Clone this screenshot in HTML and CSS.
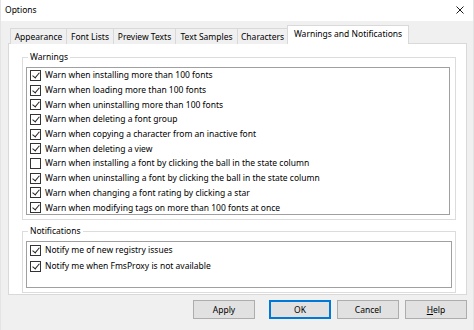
FILE: index.html
```html
<!DOCTYPE html>
<html>
<head>
<meta charset="utf-8">
<link rel="stylesheet" href="styles.css">
</head>
<body>
<div class="window">
  <div class="titlebar">
    <span class="title">Options</span>
    <svg class="close" width="8" height="8" viewBox="0 0 8 8"><path d="M0.5 0.5L7.5 7.5M7.5 0.5L0.5 7.5" stroke="#1a1a1a" stroke-width="1"/></svg>
  </div>
  <div class="content">
    <div class="tabs">
      <div class="tab w1">Appearance</div>
      <div class="tab w2">Font Lists</div>
      <div class="tab w3">Preview Texts</div>
      <div class="tab w4">Text Samples</div>
      <div class="tab w5">Characters</div>
      <div class="tab active w6">Warnings and Notifications</div>
    </div>
    <div class="panel">
      <fieldset class="group g-warn">
        <legend>Warnings</legend>
        <div class="list list-warn">
          <div class="row"><span class="cb on"></span>Warn when installing more than 100 fonts</div>
          <div class="row"><span class="cb on"></span>Warn when loading more than 100 fonts</div>
          <div class="row"><span class="cb on"></span>Warn when uninstalling more than 100 fonts</div>
          <div class="row"><span class="cb on"></span>Warn when deleting a font group</div>
          <div class="row"><span class="cb on"></span>Warn when copying a character from an inactive font</div>
          <div class="row"><span class="cb on"></span>Warn when deleting a view</div>
          <div class="row"><span class="cb"></span>Warn when installing a font by clicking the ball in the state column</div>
          <div class="row"><span class="cb on"></span>Warn when uninstalling a font by clicking the ball in the state column</div>
          <div class="row"><span class="cb on"></span>Warn when changing a font rating by clicking a star</div>
          <div class="row"><span class="cb on"></span>Warn when modifying tags on more than 100 fonts at once</div>
        </div>
      </fieldset>
      <fieldset class="group g-notif">
        <legend>Notifications</legend>
        <div class="list list-notif">
          <div class="row"><span class="cb on"></span>Notify me of new registry issues</div>
          <div class="row"><span class="cb on"></span>Notify me when FmsProxy is not available</div>
        </div>
      </fieldset>
    </div>
    <div class="buttons">
      <div class="btn apply">Apply</div>
      <div class="btn default">OK</div>
      <div class="btn">Cancel</div>
      <div class="btn"><u>H</u>elp</div>
    </div>
  </div>
</div>
</body>
</html>
```
FILE: styles.css
```css
* { box-sizing: border-box; }
html, body { margin: 0; padding: 0; }
body {
  width: 474px;
  height: 330px;
  overflow: hidden;
  background: #f0f0f0;
  font-family: "Noto Sans", "Open Sans", sans-serif;
  font-size: 8.5px;
  color: #000;
}
.window {
  width: 474px;
  height: 330px;
  display: flex;
  flex-direction: column;
  border-left: 1px solid #e4e4e4;
  border-right: 1px solid #e4e4e4;
}
.titlebar {
  height: 21px;
  background: #fff;
  display: flex;
  align-items: center;
  justify-content: space-between;
  padding: 0 9px 2px 4px;
}
.title { line-height: 12px; }
.close { display: block; }
.content {
  flex: 1;
  display: flex;
  flex-direction: column;
  padding: 4px 6px 0 7px;
}
.tabs {
  display: flex;
  align-items: flex-end;
  padding-left: 2px;
  height: 19px;
  position: relative;
  z-index: 1;
  margin-bottom: -1px;
}
.tab {
  height: 16px;
  border: 1px solid #d9d9d9;
  border-bottom: none;
  background: #f0f0f0;
  margin-right: -1px;
  text-align: center;
  line-height: 15px;
  white-space: nowrap;
}
.tab.active {
  height: 19px;
  background: #fff;
  line-height: 15px;
}
.w1 { width: 57px; }
.w2 { width: 48px; }
.w3 { width: 63px; }
.w4 { width: 63px; }
.w5 { width: 51px; }
.w6 { width: 122px; }
.panel {
  height: 252px;
  background: #fff;
  border: 1px solid #d9d9d9;
  padding: 7px 10px 0 13px;
  display: flex;
  flex-direction: column;
  gap: 5px;
}
.group {
  margin: 0;
  padding: 4px 5px 4px 3px;
  border: 1px solid #dcdcdc;
  min-width: 0;
}
.group legend {
  padding: 0 2px;
  margin-left: 2px;
  line-height: 12px;
}
.list {
  border: 1px solid #a0a0a0;
  background: #fff;
  padding: 0;
}
.list-warn { height: 148px; }
.list-notif { height: 47px; margin-right: -2px; }
.row {
  height: 14.7px;
  display: flex;
  align-items: center;
  white-space: nowrap;
  padding-left: 3px;
  line-height: 12px;
}
.list-notif .row { height: 16px; }
.cb {
  width: 11px;
  height: 11px;
  border: 1px solid #333;
  background: #fff;
  margin-right: 4px;
  flex: none;
  position: relative;
}
.cb.on::after {
  content: "";
  position: absolute;
  left: 3px;
  top: 0px;
  width: 3px;
  height: 6px;
  border-right: 1px solid #222;
  border-bottom: 1px solid #222;
  transform: rotate(40deg);
}
.buttons {
  display: flex;
  justify-content: flex-end;
  gap: 6px;
  padding-top: 5px;
}
.btn {
  width: 62px;
  height: 19px;
  background: #e1e1e1;
  border: 1px solid #adadad;
  text-align: center;
  line-height: 17px;
}
.btn.apply { margin-right: 8px; }
.btn.default { border: 1px solid #0078d7; box-shadow: inset 0 0 0 1px #0078d7; }
```
